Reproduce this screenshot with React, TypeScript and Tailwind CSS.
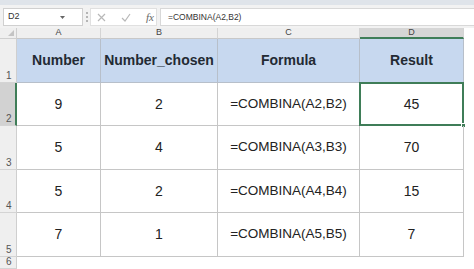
import { Fragment } from "react";

const cols = ["A", "B", "C", "D"];

const rows = [
  { n: 2, a: "9", b: "2", f: "=COMBINA(A2,B2)", r: "45" },
  { n: 3, a: "5", b: "4", f: "=COMBINA(A3,B3)", r: "70" },
  { n: 4, a: "5", b: "2", f: "=COMBINA(A4,B4)", r: "15" },
  { n: 5, a: "7", b: "1", f: "=COMBINA(A5,B5)", r: "7" },
];

const font = { fontFamily: '"Liberation Sans", Arial, sans-serif' };

function RowNum({ n, active = false }: { n: number; active?: boolean }) {
  return (
    <div
      className={`flex items-end pl-[6px] pb-[1px] text-[10px] leading-none text-[#555] border-b border-[#d4d4d4] ${
        active ? "bg-[#d2d2d2] border-r-2 border-r-[#3f7d58]" : "bg-[#efefef] border-r border-r-[#cfcfcf]"
      }`}
    >
      {n}
    </div>
  );
}

export default function App() {
  return (
    <div className="w-[474px] h-[269px] overflow-hidden bg-white text-[#222]" style={font}>
      {/* top strip */}
      <div className="h-[5px] bg-[#dfe4ea]" />

      {/* formula bar */}
      <div className="h-[23px] bg-[#f2f2f2] flex items-start pt-[3px] pl-[3px] gap-[3px]">
        <div className="w-[80px] h-[18px] bg-white border border-[#d0d0d0] flex items-center justify-between pl-[4px] pr-[17px] text-[9px] text-[#333]">
          <span>D2</span>
          <svg width="5" height="3" viewBox="0 0 5 3">
            <path d="M0 0h5L2.5 3z" fill="#666" />
          </svg>
        </div>
        <div className="w-[3px] h-[18px] flex flex-col items-center justify-center gap-[2px] mx-[-1px]">
          <span className="w-[2px] h-[2px] bg-[#b5b5b5]" />
          <span className="w-[2px] h-[2px] bg-[#b5b5b5]" />
          <span className="w-[2px] h-[2px] bg-[#b5b5b5]" />
        </div>
        <div className="w-[67px] h-[18px] bg-white border border-[#e0e0e0] flex items-center pl-[6px] gap-[15px]">
          <svg width="9" height="9" viewBox="0 0 9 9">
            <path d="M1 1l7 7M8 1L1 8" stroke="#b8b8b8" strokeWidth="1.2" />
          </svg>
          <svg width="10" height="9" viewBox="0 0 10 9">
            <path d="M1 5l3 3 5-7" stroke="#b8b8b8" strokeWidth="1.2" fill="none" />
          </svg>
          <span className="text-[11px] italic text-[#666]" style={{ fontFamily: '"Liberation Serif", serif' }}>
            fx
          </span>
        </div>
        <div className="flex-1 h-[18px] bg-white border border-[#d8d8d8] border-r-0 flex items-center pl-[7px] text-[8.5px] text-[#333]">
          =COMBINA(A2,B2)
        </div>
      </div>

      {/* sheet */}
      <div className="grid grid-cols-[17px_84px_117px_142px_104px_1fr] grid-rows-[11px_44px_43px_44px_43px_44px_12px]">
        {/* column letters */}
        <div className="bg-[#efefef] border-r border-b border-[#cfcfcf] flex items-end justify-end pr-[2px] pb-[2px]">
          <svg width="6" height="6" viewBox="0 0 6 6">
            <path d="M6 0v6H0z" fill="#c4c4c4" />
          </svg>
        </div>
        {cols.map((c) => (
          <div
            key={c}
            className={`flex items-center justify-center text-[9px] text-[#444] border-r border-[#d4d4d4] ${
              c === "D" ? "bg-[#d6d6d6] border-b-2 border-b-[#3f7d58]" : "bg-[#efefef] border-b border-b-[#c8c8c8]"
            }`}
          >
            {c}
          </div>
        ))}
        <div className="bg-white" />

        {/* header row */}
        <RowNum n={1} />
        {["Number", "Number_chosen", "Formula", "Result"].map((h) => (
          <div
            key={h}
            className="bg-[#c7d8ef] border-r border-b border-[#b7bfca] flex items-center justify-center text-[14px] font-bold text-[#232a33]"
          >
            {h}
          </div>
        ))}
        <div className="bg-white" />

        {/* data rows */}
        {rows.map((r) => (
          <Fragment key={r.n}>
            <RowNum n={r.n} active={r.n === 2} />
            <div className="border-r border-b border-[#c6c6c6] flex items-center justify-center text-[14px]">{r.a}</div>
            <div className="border-r border-b border-[#c6c6c6] flex items-center justify-center text-[14px]">{r.b}</div>
            <div className="border-r border-b border-[#c6c6c6] flex items-center justify-center text-[13.5px]">{r.f}</div>
            <div className="relative border-r border-b border-[#c6c6c6] flex items-center justify-center text-[14px]">
              {r.r}
              {r.n === 2 && (
                <>
                  <div className="absolute -left-px -top-px right-[-1px] bottom-[-1px] border-2 border-[#3f7d58]" />
                  <div className="absolute right-[-3px] bottom-[-3px] w-[5px] h-[5px] bg-[#3f7d58] border border-white" />
                </>
              )}
            </div>
            <div className="bg-white" />
          </Fragment>
        ))}

        {/* row 6 */}
        <RowNum n={6} />
        <div className="col-span-5 bg-white" />
      </div>
    </div>
  );
}
